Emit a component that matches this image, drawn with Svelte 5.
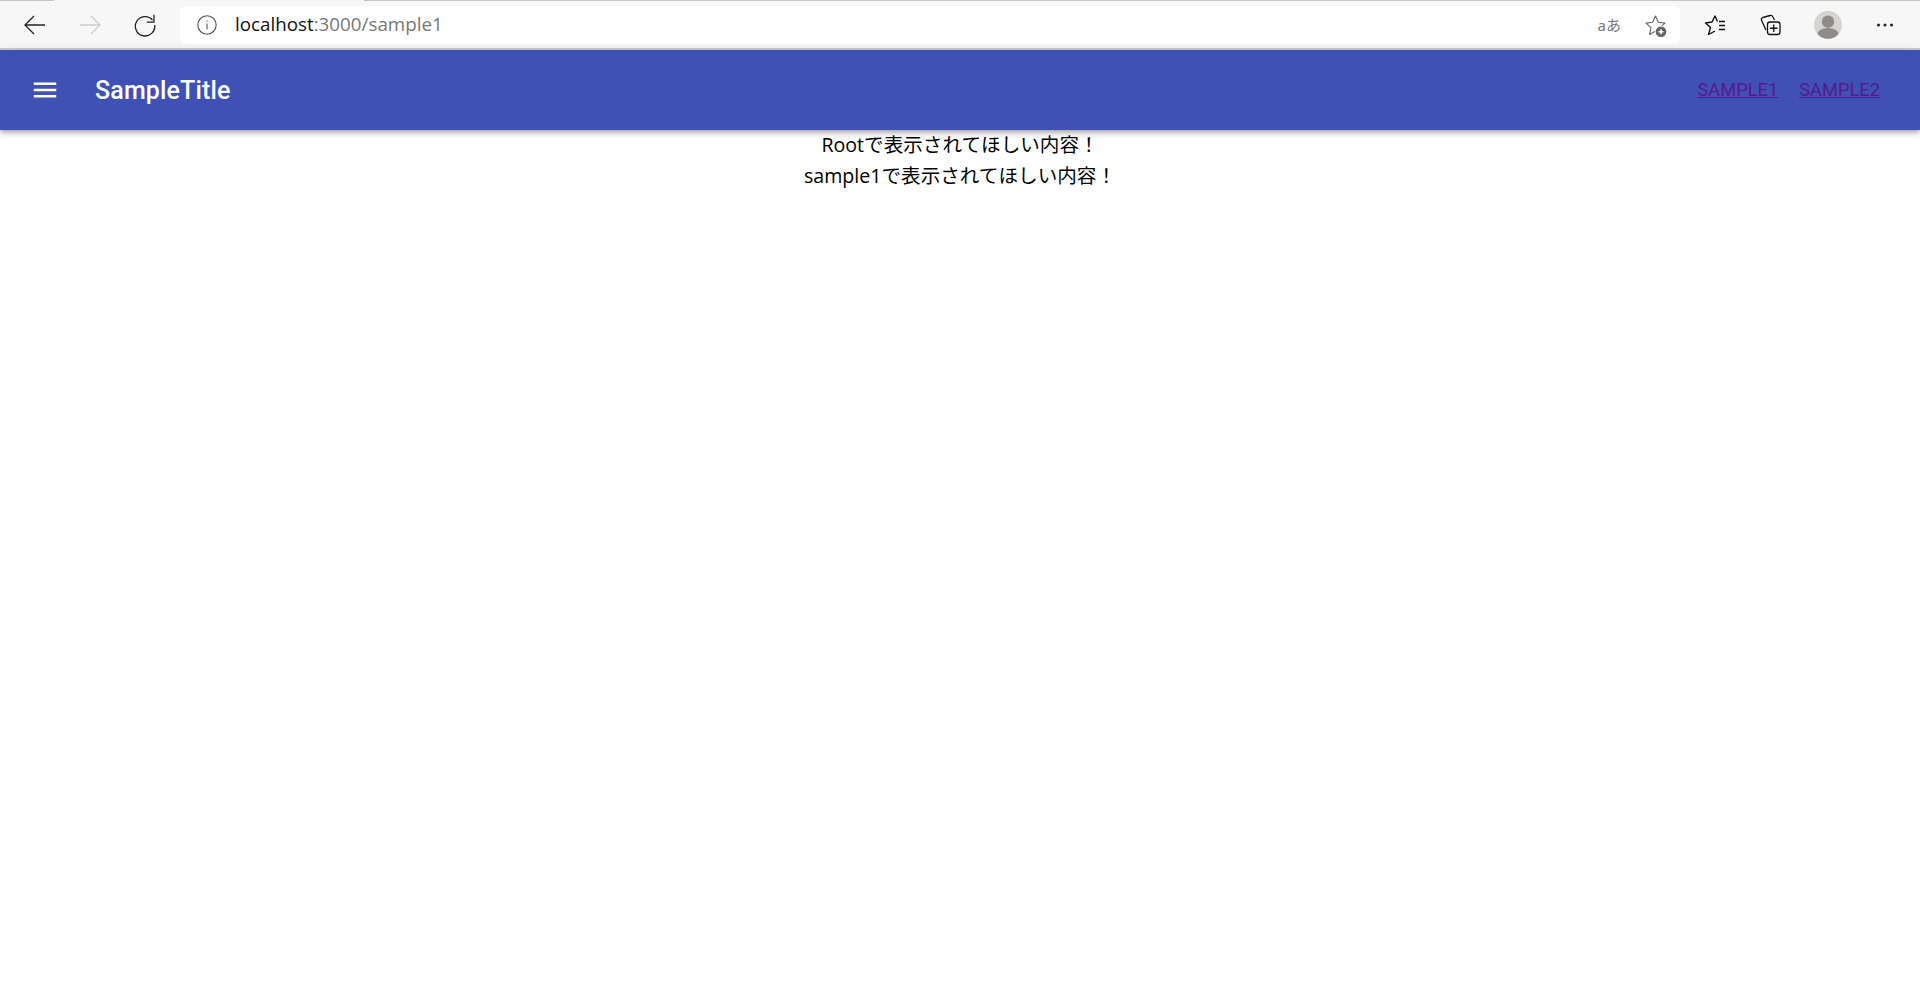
<script lang="ts">
    const links = ["SAMPLE1", "SAMPLE2"];
</script>

<div class="browser">
    <div class="tabstrip"><span class="tab-gap"></span></div>
    <div class="toolbar">
        <button class="nav first" aria-label="Back">
            <svg width="24" height="24" viewBox="0 0 24 24" fill="none" stroke="#222" stroke-width="1.3">
                <path d="M22 12H2M11 3l-9 9 9 9" />
            </svg>
        </button>
        <button class="nav" aria-label="Forward">
            <svg width="24" height="24" viewBox="0 0 24 24" fill="none" stroke="#ccc" stroke-width="1.3">
                <path d="M2 12h20M13 3l9 9-9 9" />
            </svg>
        </button>
        <button class="nav" aria-label="Reload">
            <svg width="24" height="24" viewBox="0 0 24 24" fill="none" stroke="#222" stroke-width="1.3">
                <path d="M19.5 7A9.7 9.7 0 1 0 21.7 12" />
                <path d="M21 1.8v7.4h-7.3" />
            </svg>
        </button>
        <div class="address">
            <svg class="info" width="20" height="20" viewBox="0 0 20 20" fill="none" stroke="#555" stroke-width="1.1">
                <circle cx="10" cy="10" r="9.2" />
                <path d="M10 8.6v6M10 5.4v1.4" />
            </svg>
            <span class="url">localhost<span class="dim">:3000/sample1</span></span>
            <span class="spacer"></span>
            <span class="translate">aあ</span>
            <svg class="fav-add" width="24" height="24" viewBox="0 0 24 24" fill="none">
                <path d="M10.5 3l2.8 6.3 6.7.8-5 4.6 1.4 6.8-5.9-3.4-5.9 3.4 1.4-6.8-5-4.6 6.7-.8z" stroke="#666" stroke-width="1.1" stroke-linejoin="round" />
                <circle cx="16" cy="18.8" r="5.8" fill="#666" stroke="#fff" stroke-width="1" />
                <path d="M16 16.3v5M13.5 18.8h5" stroke="#fff" stroke-width="1.5" />
            </svg>
        </div>
        <div class="tools">
            <svg width="24" height="24" viewBox="0 0 24 24" fill="none" stroke="#111" stroke-width="1.4" stroke-linejoin="round">
                <path d="M13.5 8.5L11 3 8 9l-6.5 1 5 4.5-2 7 6.5-3.5" />
                <path d="M15 8.5h6M15 12.5h6M15 16.5h6" />
            </svg>
            <svg width="24" height="24" viewBox="0 0 24 24" fill="none" stroke="#111" stroke-width="1.3" stroke-linejoin="round">
                <path d="M7 17L2.6 7.5c-.5-1.3 0-2.500 1.200-3L11 2.500c1.300-.3 2.400.2 3 1.500l1.500 3" />
                <rect x="8.5" y="9" width="12.5" height="12.5" rx="2.5" />
                <path d="M14.75 11.5v7.5M11 15.25h7.5" />
            </svg>
            <svg class="avatar" width="28" height="28" viewBox="0 0 28 28">
                <circle cx="14" cy="14" r="14" fill="#d6d4d1" />
                <circle cx="14" cy="10.7" r="6.2" fill="#8e8b88" />
                <path d="M3.5 23a10.5 6 0 0 1 21 0 14 14 0 0 1-21 0z" fill="#8e8b88" />
            </svg>
            <svg class="more" width="16" height="4" viewBox="0 0 16 4" fill="#222">
                <circle cx="1.5" cy="2" r="1.5" />
                <circle cx="8" cy="2" r="1.5" />
                <circle cx="14.5" cy="2" r="1.5" />
            </svg>
        </div>
    </div>
</div>

<header class="appbar">
    <button class="menu" aria-label="menu">
        <svg width="30" height="30" viewBox="0 0 24 24" fill="#fff">
            <path d="M3 18h18v-2H3v2zm0-5h18v-2H3v2zm0-7v2h18V6H3z" />
        </svg>
    </button>
    <h6 class="title">SampleTitle</h6>
    <nav class="links">
        {#each links as link}
            <a href="#top">{link}</a>
        {/each}
    </nav>
</header>

<main class="content">
    <div>Rootで表示されてほしい内容！</div>
    <div>sample1で表示されてほしい内容！</div>
</main>

<style>
    :global(body) {
        margin: 0;
        background: #fff;
        font-family: "Noto Sans", "Noto Sans CJK JP", sans-serif;
    }

    button {
        border: 0;
        background: none;
        padding: 0;
        display: flex;
    }

    .browser {
        background: #f7f7f7;
        height: 48px;
        border-bottom: 2px solid #cdcdcd;
    }

    .tabstrip {
        height: 1px;
        background: #c4c4c4;
    }

    .tab-gap {
        display: block;
        width: 310px;
        margin-left: 54px;
        height: 1px;
        background: #f7f7f7;
    }

    .toolbar {
        display: flex;
        align-items: center;
        height: 47px;
    }

    .nav {
        margin-left: 31px;
    }

    .nav.first {
        margin-left: 23px;
    }

    .address {
        width: 1500px;
        height: 38px;
        margin-left: 23px;
        background: #fff;
        border-radius: 6px;
        display: flex;
        align-items: center;
    }

    .info {
        margin-left: 17px;
    }

    .url {
        margin: 0 0 2px 18px;
        font-family: "Open Sans", "Noto Sans", sans-serif;
        font-size: 18.8px;
        color: #111;
    }

    .dim {
        color: #777;
    }

    .spacer {
        flex: 1;
    }

    .translate {
        font-family: "Noto Sans", "Noto Sans CJK JP", sans-serif;
        font-size: 15px;
        color: #777;
    }

    .fav-add {
        margin: 0 11px 0 24px;
    }

    .tools {
        display: flex;
        align-items: center;
    }

    .tools svg:first-child {
        margin-left: 24px;
    }

    .tools svg:nth-child(2) {
        margin-left: 31px;
    }

    .avatar {
        margin-left: 31px;
        margin-top: 1px;
    }

    .more {
        margin-left: 35px;
    }

    .appbar {
        display: flex;
        align-items: center;
        height: 80px;
        padding: 0 40px 0 30px;
        background: #3f51b5;
        box-shadow: 0 2px 4px -1px rgba(0, 0, 0, 0.2), 0 4px 5px 0 rgba(0, 0, 0, 0.14), 0 1px 10px 0 rgba(0, 0, 0, 0.12);
    }

    .menu {
        margin-right: 35px;
    }

    .title {
        margin: 0;
        flex: 1;
        font-family: Roboto, sans-serif;
        font-size: 25px;
        font-weight: 500;
        letter-spacing: 0.15px;
        color: #fff;
    }

    .links {
        display: flex;
        gap: 21px;
        margin-bottom: 2px;
    }

    .links a {
        font-family: Roboto, sans-serif;
        font-size: 18.3px;
        color: #551a8b;
    }

    .content {
        margin-top: -1px;
        font-family: "Open Sans", "Noto Sans CJK JP", sans-serif;
        font-size: 19.6px;
        line-height: 31px;
        color: #000;
        text-align: center;
    }
</style>
